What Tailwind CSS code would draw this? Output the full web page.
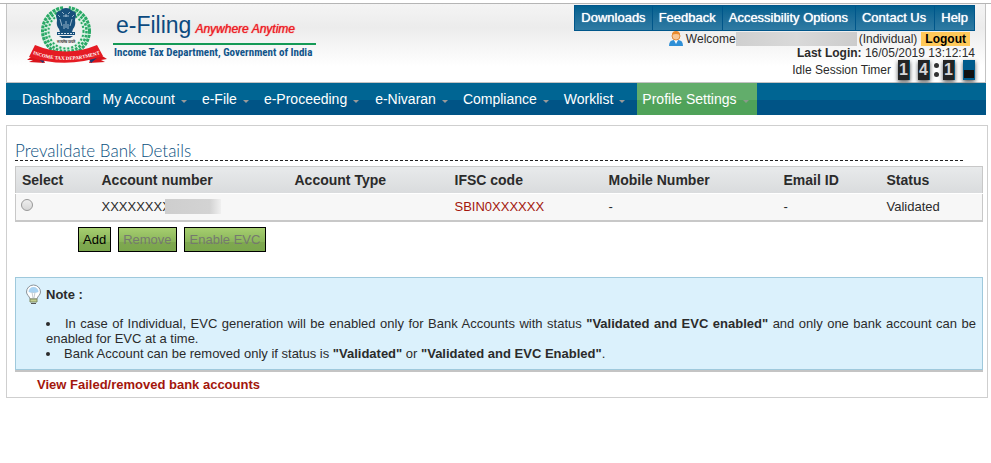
<!DOCTYPE html>
<html lang="en">
<head>
    <meta charset="UTF-8">
    <meta name="viewport" content="width=device-width, initial-scale=1.0">
    <title>e-Filing - Prevalidate Bank Details</title>
    <script src="https://cdn.jsdelivr.net/npm/@tailwindcss/browser@4"></script>
</head>
<body class="bg-white pt-[3px] font-['Liberation_Sans',Arial,sans-serif] text-[13px] leading-[15px] text-[#2b2b2b]">

    <div class="border-t border-[#b5b5b5]"></div>

    <header
        class="ml-[6px] mr-[5px] h-[79px] flex justify-between items-start border-x border-b border-[#c3c3c3] bg-gradient-to-b from-[#f4f4f4] via-[#ececec] via-30% to-white to-80%">
        <a href="#" class="flex items-start pl-5 pt-[2px]">
            <svg class="w-[82px] h-[60px] shrink-0" viewBox="0 0 82 60">
                <!-- laurel wreath -->
                <g fill="none" stroke="#2aa866">
                    <circle cx="39" cy="25" r="20.500" stroke="#d9f0e2" stroke-width="9" />
                    <circle cx="39" cy="25" r="23.500" stroke-width="3" stroke-dasharray="3 1" />
                    <circle cx="39" cy="25" r="20.500" stroke-width="2.500" stroke-dasharray="2.500 1.500" />
                    <circle cx="39" cy="25" r="17.500" stroke-width="2" stroke-dasharray="2 2" />
                </g>
                <path d="M36 0h6l-1 8h-4z" fill="#f1f1f1" />
                <!-- lion capital -->
                <g fill="#17507c">
                    <path d="M33 5q2-3 6-3t6 3q4 0 4 5l-1 4q1 6-2 9l-1 3H33l-1-3q-3-3-2-9l-1-4q0-5 4-5z" />
                    <path d="M30 26h18v3H30z" />
                    <path d="M32 30h14l-3 2h-8z" />
                </g>
                <g fill="none" stroke="#cfe0ec" stroke-width="1">
                    <path d="M35 6l2 2M43 6l-2 2M39 8v3M36 10h6M33 13l2 7M45 13l-2 7M39 15v7M37 18v5M41 18v5M31 9l2 2M47 9l-2 2" stroke-width=".7" />
                    <path d="M31 27.500h16" stroke-dasharray="2 1" />
                </g>
                <text x="39" y="37" text-anchor="middle" font-size="4" font-weight="bold" fill="#333">सत्यमेव जयते</text>
                <!-- ribbon -->
                <path d="M0 54l8-6 8 4 2 5-16-1 4-2z" fill="#d8141c" />
                <path d="M80 53l-8-5-8 4-2 5 16-1-4-2z" fill="#d8141c" />
                <path d="M8 50l10 3-2 4zM72 50l-10 3 2 4z" fill="#1b3b73" />
                <path d="M8 39q31 13 62 0l6 11q-37 13-74 1z" fill="#e51b23" />
                <path id="ribbon-line" d="M3 47q36 14 73 0" fill="none" />
                <text font-size="5" font-weight="bold" fill="#fff" font-family="Liberation Serif, serif">
                    <textPath href="#ribbon-line" startOffset="50%" text-anchor="middle">INCOME TAX DEPARTMENT</textPath>
                </text>
            </svg>
            <span class="flex flex-col ml-[4px] pt-[6px]">
                <span class="flex items-baseline gap-1 px-[3px] text-[23px] leading-[27px] text-[#0b4a7f]">
                    e-Filing
                    <i class="text-[12px] text-[#ee1c25] [text-shadow:0_0_1px_#ee1c25]">Anywhere Anytime</i>
                </span>
                <span
                    class="border-t-2 border-[#159a56] pt-px pl-px pr-1 font-['Roboto_Condensed','Roboto','Liberation_Sans',sans-serif] text-[11px] leading-[14px] font-bold text-[#12558a]">Income Tax Department, Government of India</span>
            </span>
        </a>

        <div class="flex flex-col items-end pr-[10px] pt-px">
            <nav
                class="flex border border-[#00568a] bg-gradient-to-b from-[#00608f] to-[#2f7ba3] text-[13px] leading-6 text-white [text-shadow:0_0_1px_#fff]">
                <a href="#" class="px-[6px] border-r border-[#00568a]">Downloads</a>
                <a href="#" class="px-[6px] border-r border-[#00568a]">Feedback</a>
                <a href="#" class="pl-[6px] pr-[7px] border-r border-[#00568a]">Accessibility Options</a>
                <a href="#" class="pl-[6px] pr-2 border-r border-[#00568a]">Contact Us</a>
                <a href="#" class="px-[6px]">Help</a>
            </nav>
            <div class="flex items-center h-4 pr-[5px] text-[12px]">
                <svg class="w-4 h-4 mr-[2px]" viewBox="0 0 16 16">
                    <path d="M1 15q0-6 5-6h4q5 0 5 6z" fill="#2f8fd6" />
                    <path d="M6 9l2 4 2-4z" fill="#fff" />
                    <circle cx="8" cy="5" r="4" fill="#f9c794" stroke="#e08a3c" />
                    <path d="M4 4q0-4 4-4t4 4q-4-2-8 0z" fill="#e98b2f" />
                </svg>
                <span>Welcome</span>
                <span class="w-[121px] h-[14px] mr-[2px] bg-gradient-to-r from-[#cfcfcf] via-[#d9d9d9] to-[#cccccc]"></span>
                <span>(Individual)</span>
                <button type="button" class="ml-1 px-1 h-[14px] bg-[#ffc959] text-[12px] leading-[14px] font-bold text-black">Logout</button>
            </div>
            <p class="text-[12px] leading-[13px]"><b>Last Login:</b> 16/05/2019 13:12:14</p>
            <div class="flex items-center text-[12px]">
                <span class="mr-[7px]">Idle Session Timer</span>
                <span class="flex items-center text-[16px] leading-5 font-bold text-[#d6d6d6] text-center">
                    <span class="w-3 h-5 border-r border-[#005b8c] bg-[#242424] shadow-[0_2px_4px_#555]">1</span>
                    <span class="w-3 h-5 ml-2 border-r border-[#005b8c] bg-[#242424] shadow-[0_2px_4px_#555]">4</span>
                    <span class="w-[13px] flex flex-col items-center gap-1">
                        <span class="size-[5px] rounded-full bg-[#333]"></span>
                        <span class="size-[5px] rounded-full bg-[#333]"></span>
                    </span>
                    <span class="w-3 h-5 border-r border-[#005b8c] bg-[#242424] shadow-[0_2px_4px_#555]">1</span>
                    <span class="w-3 h-5 ml-2 pt-[10px] px-px bg-[#005b8c] shadow-[0_2px_4px_#555]">
                        <span class="block h-2 bg-[#111]"></span>
                    </span>
                </span>
            </div>
        </div>
    </header>

    <nav
        class="ml-[6px] mr-[5px] h-8 flex pl-4 bg-linear-[to_bottom,#006593_17px,#005486_17px] text-[14px] leading-8 text-white">
        <a href="#" class="pr-3">Dashboard</a>
        <a href="#" class="flex items-center pr-[15px]">My Account
            <svg class="ml-[6px] mt-[5px] w-[6px] h-[3px] fill-[#9a9a9a]" viewBox="0 0 6 3"><path d="M0 0h6L3 3z" /></svg></a>
        <a href="#" class="flex items-center pr-[15px]">e-File
            <svg class="ml-[6px] mt-[5px] w-[6px] h-[3px] fill-[#9a9a9a]" viewBox="0 0 6 3"><path d="M0 0h6L3 3z" /></svg></a>
        <a href="#" class="flex items-center pr-4">e-Proceeding
            <svg class="ml-[6px] mt-[5px] w-[6px] h-[3px] fill-[#9a9a9a]" viewBox="0 0 6 3"><path d="M0 0h6L3 3z" /></svg></a>
        <a href="#" class="flex items-center pr-[15px]">e-Nivaran
            <svg class="ml-[6px] mt-[5px] w-[6px] h-[3px] fill-[#9a9a9a]" viewBox="0 0 6 3"><path d="M0 0h6L3 3z" /></svg></a>
        <a href="#" class="flex items-center pr-[15px]">Compliance
            <svg class="ml-[6px] mt-[5px] w-[6px] h-[3px] fill-[#9a9a9a]" viewBox="0 0 6 3"><path d="M0 0h6L3 3z" /></svg></a>
        <a href="#" class="flex items-center pr-3">Worklist
            <svg class="ml-[6px] mt-[5px] w-[6px] h-[3px] fill-[#9a9a9a]" viewBox="0 0 6 3"><path d="M0 0h6L3 3z" /></svg></a>
        <a href="#" class="flex items-center pl-[5px] pr-2 bg-linear-[to_bottom,#62ad6b_17px,#4fa259_17px]">Profile Settings
            <svg class="ml-[6px] mt-[5px] w-[6px] h-[3px] fill-[#8a9a8a]" viewBox="0 0 6 3"><path d="M0 0h6L3 3z" /></svg></a>
    </nav>

    <main class="ml-[6px] mr-[3px] mt-[10px] pl-2 pr-1 pt-4 pb-[5px] border border-[#cfcfcf]">
        <h1
            class="mr-5 border-b border-dashed border-[#222] font-['Lato','Liberation_Sans',sans-serif] font-light text-[17px] leading-[18px] text-[#0a4f80]">Prevalidate Bank Details</h1>

        <table class="mt-[5px] w-full table-fixed border-collapse border border-b-2 border-[#c8c8c8] text-left">
            <thead class="bg-gradient-to-b from-[#e8eaeb] to-[#d9dbdd] text-[14px]">
                <tr class="h-[27px] border-b border-white">
                    <th class="w-[80px] pl-[6px]">Select</th>
                    <th class="w-[193px] pl-[6px]">Account number</th>
                    <th class="w-[160px] pl-[6px]">Account Type</th>
                    <th class="w-[154px] pl-[6px]">IFSC code</th>
                    <th class="w-[175px] pl-[6px]">Mobile Number</th>
                    <th class="w-[103px] pl-[6px]">Email ID</th>
                    <th class="pl-[6px]">Status</th>
                </tr>
            </thead>
            <tbody class="bg-[#f7f7f7]">
                <tr class="h-[27px]">
                    <td class="pl-[5px]"><input type="radio" name="account" aria-label="Select account"
                            class="block mb-1 size-3 appearance-none rounded-full border border-[#999] bg-gradient-to-b from-[#eee] to-[#d6d6d6]"></td>
                    <td class="pl-[6px]">
                        <span class="flex items-center">
                            <span>XXXXXXXX</span>
                            <span class="-ml-[6px] w-[56px] h-[15px] bg-gradient-to-r from-[#cecece] via-[#d3d3d3] via-80% to-[#f0f0f0]"></span>
                        </span>
                    </td>
                    <td></td>
                    <td class="pl-[6px]"><a href="#" class="text-[#a3160c]">SBIN0XXXXXX</a></td>
                    <td class="pl-[6px]">-</td>
                    <td class="pl-[6px]">-</td>
                    <td class="pl-[6px]">Validated</td>
                </tr>
            </tbody>
        </table>

        <div class="mt-[5px] pl-[63px] flex gap-[7px] leading-[23px]">
            <button type="button" class="px-1 border border-black bg-linear-[to_bottom,#a6ce6f,#8ab55a_60%,#7fa850_60%,#7aa64c] text-black">Add</button>
            <button type="button" disabled class="px-1 border border-black bg-linear-[to_bottom,#a6ce6f,#8ab55a_60%,#7fa850_60%,#7aa64c] text-[#75796f]">Remove</button>
            <button type="button" disabled class="px-[5px] border border-black bg-linear-[to_bottom,#a6ce6f,#8ab55a_60%,#7fa850_60%,#7aa64c] text-[#75796f]">Enable EVC</button>
        </div>

        <section class="mt-[25px] pt-[6px] pb-2 pl-[9px] pr-[6px] border border-[#9fc9dc] bg-[#dbf1fc] shadow-[0_2px_0_#c4c4c4]">
            <div class="flex items-center gap-1">
                <svg class="w-[17px] h-[21px]" viewBox="0 0 17 21">
                    <path d="M8.500 1a7 7 0 0 1 7 7c0 3-3 4-3.500 7H5C4.500 12 1.500 11 1.500 8a7 7 0 0 1 7-7z" fill="#fff" stroke="#8b9399" />
                    <path d="M8.500 3a5 5 0 0 1 5 5q-5 2-10 0a5 5 0 0 1 5-5z" fill="#a9d3f2" />
                    <path d="M7 8l1 6h1l1-6" fill="none" stroke="#c5cbd0" />
                    <path d="M5 15h7v3H5z" fill="#c4cf8e" stroke="#7f8b62" />
                    <path d="M6 19h5v1H6z" fill="#555" />
                </svg>
                <h2 class="font-bold">Note :</h2>
            </div>
            <ul class="mt-[11px] pl-[21px] list-disc list-inside text-justify">
                <li>In case of Individual, EVC generation will be enabled only for Bank Accounts with status <b>"Validated and EVC enabled"</b> and only one bank account can be enabled for EVC at a time.</li>
                <li>Bank Account can be removed only if status is <b>"Validated"</b> or <b>"Validated and EVC Enabled"</b>.</li>
            </ul>
        </section>

        <a href="#" class="block w-fit mt-[7px] ml-[22px] font-bold text-[#a3160c]">View Failed/removed bank accounts</a>
    </main>

</body>
</html>
